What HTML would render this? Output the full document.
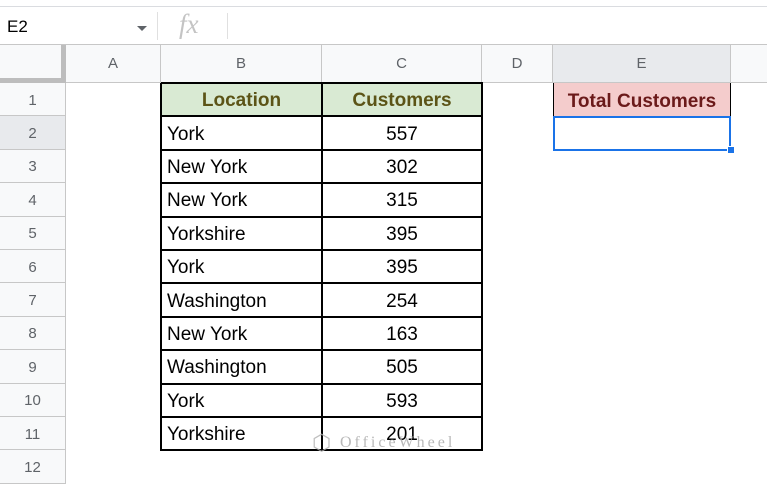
<!DOCTYPE html>
<html><head><meta charset="utf-8"><style>
*{margin:0;padding:0;box-sizing:border-box}
body{width:767px;height:483px;overflow:hidden;background:#fff;font-family:"Liberation Sans",Arial,sans-serif;position:relative}
.a{position:absolute}
.hdr{position:absolute;background:#f8f9fa;color:#5f6368;font-size:15px;display:flex;align-items:center;justify-content:center;border-right:1px solid #c7c7c7;border-bottom:1px solid #c7c7c7}
.c{position:absolute;font-size:19px;color:#000;display:flex;align-items:center;padding-top:3px}
</style></head><body>
<div class="a" style="left:0;top:0;width:767px;height:7px;border-bottom:1px solid #dadce0"></div>
<div class="a" style="left:7px;top:17px;font-size:17px;color:#000">E2</div>
<div class="a" style="left:137px;top:26px;width:0;height:0;border-left:5px solid transparent;border-right:5px solid transparent;border-top:5px solid #5f6368"></div>
<div class="a" style="left:157px;top:12px;width:1px;height:28px;background:#e0e0e0"></div>
<div class="a" style="left:179px;top:9px;font-family:'Liberation Serif',serif;font-style:italic;font-size:27px;color:#c4c4c4">fx</div>
<div class="a" style="left:227px;top:13px;width:1px;height:26px;background:#e0e0e0"></div>
<div class="a" style="left:0;top:44px;width:767px;height:1px;background:#c7c7c7"></div>
<div class="a" style="left:0;top:45px;width:66px;height:38px;background:#f8f9fa;border-right:5px solid #bdbdbd;border-bottom:5px solid #bdbdbd"></div>
<div class="hdr" style="left:66px;top:45px;width:95px;height:38px">A</div>
<div class="hdr" style="left:161px;top:45px;width:161px;height:38px">B</div>
<div class="hdr" style="left:322px;top:45px;width:160px;height:38px">C</div>
<div class="hdr" style="left:482px;top:45px;width:71px;height:38px">D</div>
<div class="hdr" style="left:553px;top:45px;width:178px;height:38px;background:#e8eaed">E</div>
<div class="hdr" style="left:731px;top:45px;width:40px;height:38px"></div>
<div id="rows"></div>
<script>
var r=document.getElementById('rows'),h='';
for(var i=0;i<12;i++){var t=83+i*33.4;h+='<div class="hdr" style="left:0;top:'+t+'px;width:66px;height:33.4px;padding-top:2px;'+(i==1?'background:#e8eaed;':'')+'">'+(i+1)+'</div>';}
var d=[["York",557],["New York",302],["New York",315],["Yorkshire",395],["York",395],["Washington",254],["New York",163],["Washington",505],["York",593],["Yorkshire",201]];
h+='<div class="a" style="left:161px;top:83px;width:161px;height:33.4px;background:#d9ead3"></div><div class="a" style="left:322px;top:83px;width:160px;height:33.4px;background:#d9ead3"></div>';
h+='<div class="c" style="left:161px;top:83px;width:161px;height:33.4px;justify-content:center;font-weight:bold;color:#5c5417">Location</div>';
h+='<div class="c" style="left:322px;top:83px;width:160px;height:33.4px;justify-content:center;font-weight:bold;color:#5c5417">Customers</div>';
for(var j=0;j<10;j++){var t=83+(j+1)*33.4;h+='<div class="c" style="left:167px;top:'+t+'px;height:33.4px">'+d[j][0]+'</div><div class="c" style="left:322px;top:'+t+'px;width:160px;height:33.4px;justify-content:center">'+d[j][1]+'</div>';}
for(var k=0;k<=11;k++){var t=83+k*33.4;h+='<div class="a" style="left:161px;top:'+(t-1)+'px;width:322px;height:2px;background:#000"></div>';}
h+='<div class="a" style="left:160px;top:83px;width:2px;height:368px;background:#000"></div><div class="a" style="left:321px;top:83px;width:2px;height:368px;background:#000"></div><div class="a" style="left:481px;top:83px;width:2px;height:368px;background:#000"></div>';
r.innerHTML=h;
</script>
<div class="a" style="left:553px;top:83px;width:178px;height:34px;background:#f4cccc;border-left:1px solid #000;border-right:1px solid #000"></div>
<div class="c" style="left:553px;top:83px;width:178px;height:34px;justify-content:center;font-weight:bold;color:#6b1a1a">Total Customers</div>
<div class="a" style="left:553px;top:116px;width:178px;height:35px;border:2px solid #1a73e8"></div>
<div class="a" style="left:727px;top:146px;width:8px;height:8px;background:#1a73e8;border:1px solid #fff"></div>
<div class="a" style="left:312px;top:430px;font-family:'Liberation Serif',serif;font-size:22px;color:#b0b0b0;opacity:.8">⬡</div>
<div class="a" style="left:340px;top:434px;font-family:'Liberation Serif',serif;font-size:16px;letter-spacing:3px;color:#a8a8a8;opacity:.8">OfficeWheel</div>
</body></html>
